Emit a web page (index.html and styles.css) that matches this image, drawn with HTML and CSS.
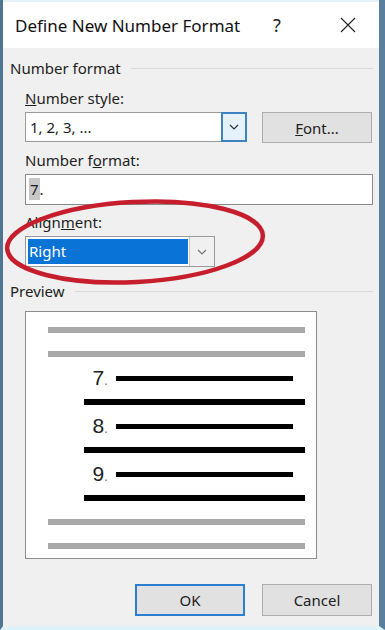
FILE: index.html
```html
<!DOCTYPE html>
<html lang="en">
<head>
    <meta charset="UTF-8">
    <meta name="viewport" content="width=device-width, initial-scale=1.0">
    <title>Define New Number Format</title>
    <link rel="stylesheet" href="styles.css">
</head>
<body>
    <div class="window">
        <div class="titlebar">
            <span class="title">Define New Number Format</span>
            <span class="help">?</span>
            <span class="close">
                <svg width="16" height="16" viewBox="0 0 16 16"><path d="M1 1 L15 15 M15 1 L1 15" stroke="#222" stroke-width="1.1" fill="none"/></svg>
            </span>
        </div>

        <div class="content">
            <div class="group-head"><span>Number format</span><i class="rule"></i></div>
            <div class="group">
                <div class="label"><u>N</u>umber style:</div>
                <div class="row">
                    <div class="combo">
                        <span class="combo-text">1, 2, 3, ...</span>
                        <span class="combo-arrow active">
                            <svg width="10" height="6" viewBox="0 0 10 6"><path d="M1 1 L5 5 L9 1" stroke="#333" stroke-width="1.2" fill="none"/></svg>
                        </span>
                    </div>
                    <div class="btn font-btn"><u>F</u>ont...</div>
                </div>

                <div class="label">Number f<u>o</u>rmat:</div>
                <div class="textbox"><span class="sel">7</span>.</div>

                <div class="label">Align<u>m</u>ent:</div>
                <div class="combo small">
                    <span class="combo-text picked">Right</span>
                    <span class="combo-arrow">
                        <svg width="10" height="6" viewBox="0 0 10 6"><path d="M1 1 L5 5 L9 1" stroke="#777" stroke-width="1.2" fill="none"/></svg>
                    </span>
                </div>
            </div>

            <div class="group-head preview-head"><span>Preview</span><i class="rule"></i></div>
            <div class="preview">
                <div class="pv-row gray"><i class="bar"></i></div>
                <div class="pv-row gray"><i class="bar"></i></div>
                <div class="pv-row num"><span class="n">7<small>.</small></span><i class="bar"></i></div>
                <div class="pv-row full"><i class="bar"></i></div>
                <div class="pv-row num"><span class="n">8<small>.</small></span><i class="bar"></i></div>
                <div class="pv-row full"><i class="bar"></i></div>
                <div class="pv-row num"><span class="n">9<small>.</small></span><i class="bar"></i></div>
                <div class="pv-row full"><i class="bar"></i></div>
                <div class="pv-row gray"><i class="bar"></i></div>
                <div class="pv-row gray"><i class="bar"></i></div>
            </div>

            <div class="actions">
                <div class="btn default">OK</div>
                <div class="btn">Cancel</div>
            </div>
        </div>

        <!-- red mark drawn over the alignment box -->
        <svg class="mark" width="280" height="100" viewBox="0 0 280 100">
            <ellipse cx="135" cy="46" rx="128" ry="40" transform="rotate(-3 135 46)" fill="none" stroke="#c61e2c" stroke-width="4.5"/>
        </svg>
    </div>
</body>
</html>
```

FILE: styles.css
```css
* {
    box-sizing: border-box;
}

body {
    margin: 0;
    background: #5a7f9e;
    font-family: "Noto Sans", "Open Sans", sans-serif;
    font-size: 15px;
    color: #1e1e1e;
}

.window {
    position: relative;
    width: 385px;
    height: 630px;
    border-left: 3px solid #4f7593;
    border-right: 6px solid #5a7f9e;
    border-bottom: 4px solid #dff3f8;
    background: #f0f0f0;
}

.titlebar {
    display: flex;
    align-items: center;
    height: 48px;
    background: #fff;
    border-top: 2px solid #e4f3f8;
}

.title {
    flex: 1;
    padding-left: 12px;
    font-size: 17px;
    color: #111;
}

.help {
    width: 46px;
    text-align: center;
    font-size: 18px;
    color: #222;
}

.close {
    display: flex;
    justify-content: center;
    width: 46px;
    margin: 0 8px 0 25px;
}

.content {
    padding: 10px 6px 0 7px;
}

.group-head {
    display: flex;
    align-items: center;
    height: 20px;
    color: #222;
}

.group-head .rule {
    flex: 1;
    height: 1px;
    margin-left: 10px;
    background: #dcdcdc;
}

.group {
    padding: 10px 0 0 15px;
}

.label {
    height: 20px;
    line-height: 20px;
    margin-bottom: 4px;
}

.row {
    display: flex;
    gap: 15px;
    margin-bottom: 7px;
}

.combo {
    display: flex;
    width: 222px;
    height: 30px;
    background: #fff;
    border: 1px solid #9a9a9a;
}

.combo-text {
    flex: 1;
    padding-left: 4px;
    line-height: 28px;
}

.combo-arrow {
    display: flex;
    align-items: center;
    justify-content: center;
    width: 25px;
    border-left: 1px solid #c9c9c9;
}

.combo-arrow.active {
    width: 26px;
    margin: -1px -1px -1px 0;
    background: #e5f1fb;
    border: 2px solid #3d83c1;
}

.combo.small {
    width: 190px;
    height: 31px;
    padding: 2px 0 2px 2px;
}

.combo.small .combo-arrow {
    margin: -2px 0;
    background: #f0f0f0;
}

.picked {
    background: #0a74d6;
    color: #fff;
    line-height: 25px;
    padding-left: 1px;
    margin-right: 1px;
}

.btn {
    display: flex;
    align-items: center;
    justify-content: center;
    width: 110px;
    height: 31px;
    background: #e1e1e1;
    border: 1px solid #adadad;
    color: #222;
}

.textbox {
    height: 31px;
    padding-left: 3px;
    line-height: 29px;
    background: #fff;
    border: 1px solid #8a8a8a;
    margin-bottom: 7px;
}

.sel {
    background: #c8c8c8;
    padding: 1px 1px;
}

.preview-head {
    margin-top: 14px;
}

.preview {
    width: 292px;
    height: 248px;
    margin: 10px 0 0 15px;
    padding-top: 6px;
    background: #fff;
    border: 1px solid #8c8c8c;
}

.pv-row {
    display: flex;
    align-items: center;
    height: 24px;
}

.pv-row .bar {
    height: 5px;
    background: #000;
}

.pv-row.gray {
    padding-left: 22px;
}

.pv-row.gray .bar {
    width: 257px;
    height: 6px;
    background: #a8a8a8;
}

.pv-row.full {
    padding-left: 58px;
}

.pv-row.full .bar {
    width: 221px;
    height: 6px;
}

.pv-row.num .n {
    width: 82px;
    text-align: right;
    font-family: "Liberation Sans", Arial, sans-serif;
    font-size: 21px;
    color: #222;
}

.pv-row.num small {
    font-size: 14px;
    color: #777;
}

.pv-row.num .bar {
    width: 177px;
    margin-left: 8px;
}

.actions {
    display: flex;
    justify-content: flex-end;
    gap: 17px;
    margin-top: 25px;
    padding-right: 1px;
}

.actions .btn {
    height: 32px;
}

.btn.default {
    border: 2px solid #2a7fd0;
}

.mark {
    position: absolute;
    left: -3px;
    top: 196px;
}
```
